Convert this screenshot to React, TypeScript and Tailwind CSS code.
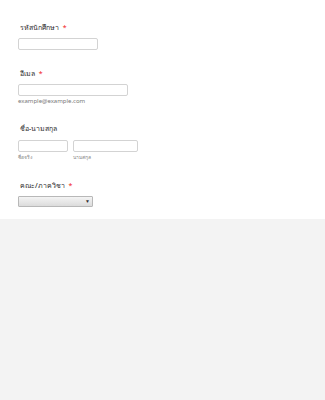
export default function App() {
  return (
    <div className="min-h-[400px] bg-[#f3f3f3] font-['Noto_Sans','Liberation_Sans',sans-serif]">
      <div className="h-[219px] bg-white pl-[18px] pt-[22px]">
        {/* Student ID */}
        <div>
          <div className="ml-[2px] h-[12px] text-[7px] font-medium leading-[12px] text-[#2b2b2b]">
            รหัสนักศึกษา <span className="ml-[2px] text-[#f23a3c]">*</span>
          </div>
          <div className="mt-[4px] h-[12px] w-[80px] rounded-[2px] border border-[#d3d3d3] bg-white" />
        </div>

        {/* Email */}
        <div className="mt-[18px]">
          <div className="ml-[2px] h-[12px] text-[7px] font-medium leading-[12px] text-[#2b2b2b]">
            อีเมล <span className="ml-[2px] text-[#f23a3c]">*</span>
          </div>
          <div className="mt-[4px] h-[12px] w-[110px] rounded-[2px] border border-[#d3d3d3] bg-white" />
          <div className="mt-[1px] text-[6px] leading-[9px] text-[#777]">example@example.com</div>
        </div>

        {/* Full name */}
        <div className="mt-[17px]">
          <div className="ml-[2px] h-[12px] text-[7px] font-medium leading-[12px] text-[#2b2b2b]">
            ชื่อ-นามสกุล
          </div>
          <div className="mt-[5px] flex gap-[5px]">
            <div>
              <div className="h-[12px] w-[50px] rounded-[2px] border border-[#d3d3d3] bg-white" />
              <div className="mt-[1px] text-[5px] leading-[8px] text-[#888]">ชื่อจริง</div>
            </div>
            <div>
              <div className="h-[12px] w-[65px] rounded-[2px] border border-[#d3d3d3] bg-white" />
              <div className="mt-[1px] text-[5px] leading-[8px] text-[#888]">นามสกุล</div>
            </div>
          </div>
        </div>

        {/* Faculty */}
        <div className="mt-[19px]">
          <div className="ml-[2px] h-[12px] text-[7px] font-medium leading-[12px] text-[#2b2b2b]">
            คณะ/ภาควิชา <span className="ml-[2px] text-[#f23a3c]">*</span>
          </div>
          <div className="mt-[4px] flex h-[11px] w-[75px] items-center justify-end rounded-[1px] border border-[#b8b8b8] bg-gradient-to-b from-[#f4f4f4] to-[#dcdcdc] pr-[2px]">
            <span className="text-[5px] leading-none text-[#333]">▼</span>
          </div>
        </div>
      </div>
    </div>
  );
}
